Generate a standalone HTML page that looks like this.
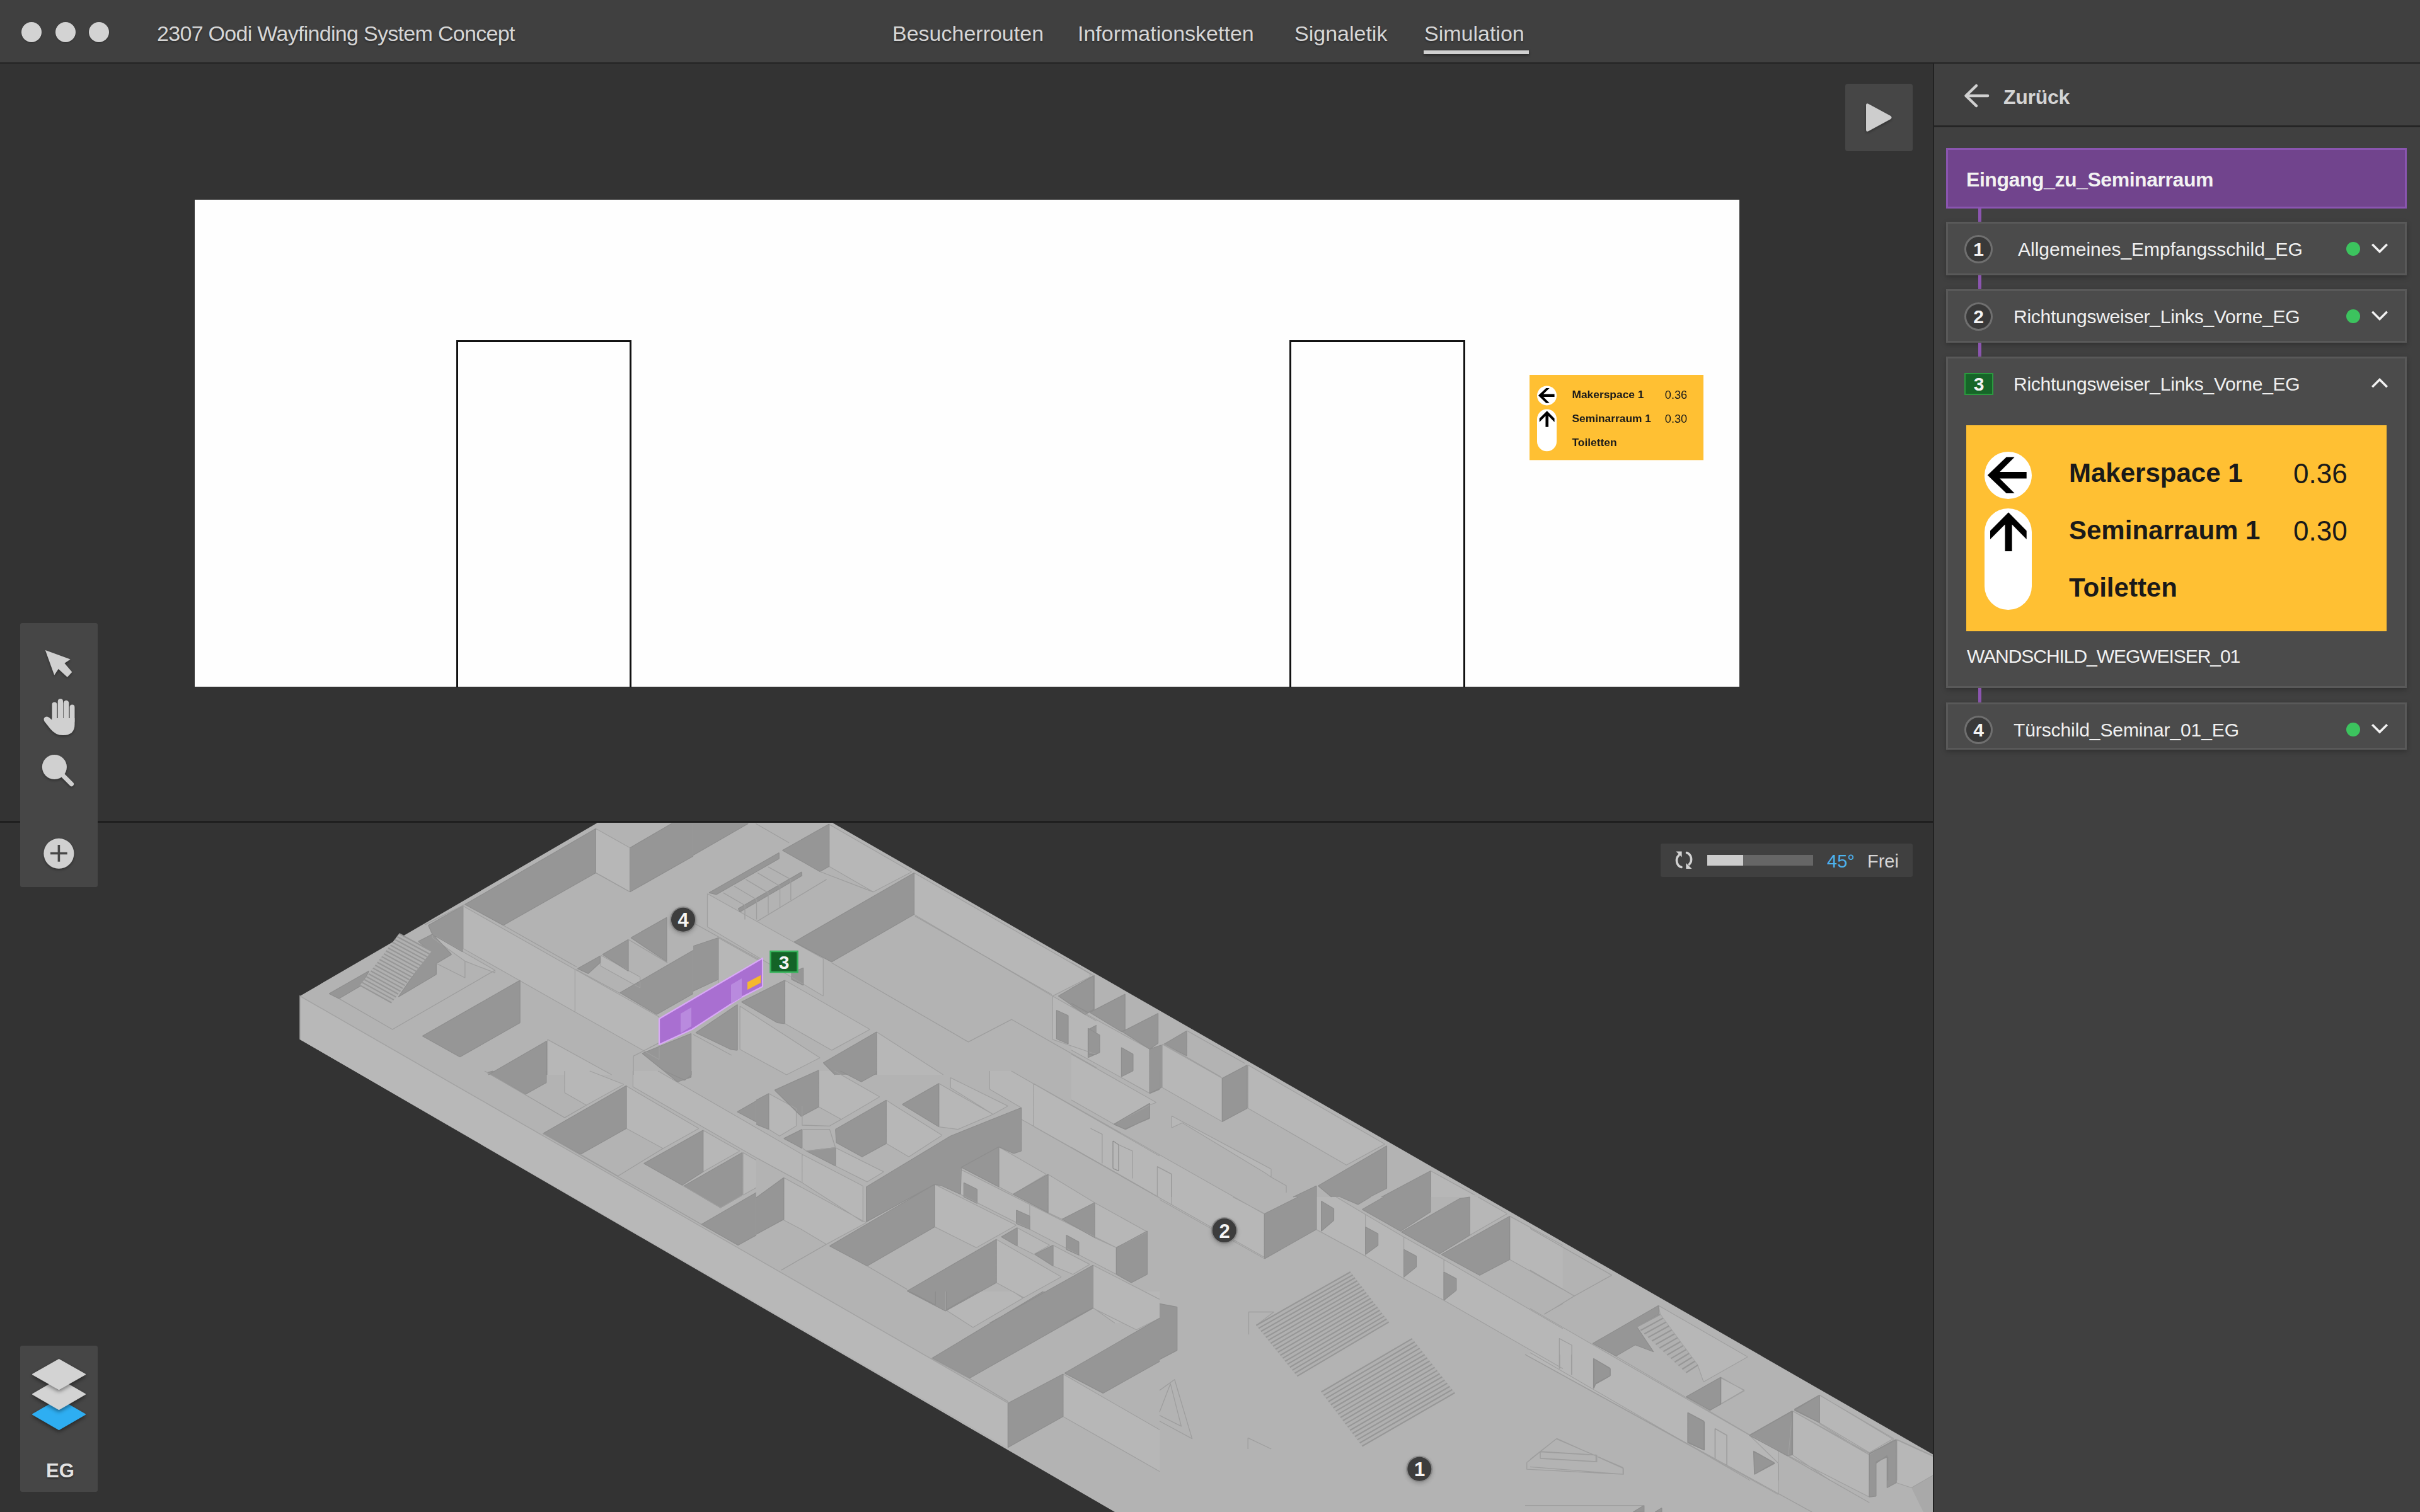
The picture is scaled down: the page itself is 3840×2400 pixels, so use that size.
<!DOCTYPE html>
<html><head><meta charset="utf-8">
<style>
*{margin:0;padding:0;box-sizing:border-box}
html,body{width:3840px;height:2400px;overflow:hidden;background:#333333;font-family:"Liberation Sans",sans-serif}
.abs{position:absolute}
#topbar{position:absolute;left:0;top:0;width:3840px;height:99px;background:#404040;border-bottom:2px solid #232323;height:101px}
.dot{position:absolute;top:35px;width:32px;height:32px;border-radius:50%;background:#d3d3d3;box-shadow:0 1px 2px rgba(0,0,0,.35)}
.t{position:absolute;white-space:nowrap;line-height:1}
#title{left:249px;top:36px;font-size:34px;letter-spacing:-0.7px;color:#d6d6d6;text-shadow:0 2px 3px rgba(0,0,0,.35)}
.nav{top:36px;font-size:34px;color:#d6d6d6;text-shadow:0 2px 3px rgba(0,0,0,.35)}
#uline{left:2259px;top:80px;width:167px;height:6px;background:#d0d0d0;box-shadow:0 2px 4px rgba(0,0,0,.4)}
#panel{position:absolute;left:3067px;top:101px;width:773px;height:2299px;background:#404040;border-left:2px solid #222}
#panelhead{position:absolute;left:3069px;top:101px;width:771px;height:101px;border-bottom:3px solid #252525}
#play{left:2928px;top:133px;width:107px;height:107px;background:#464646;border-radius:4px}
#elev{left:309px;top:317px;width:2451px;height:773px;background:#fefefe}
.door{position:absolute;top:540px;height:551px;border:3px solid #111;border-bottom:none}
.item{position:absolute;left:3088px;width:731px;background:#4b4b4b;border:3px solid #595959;box-shadow:0 3px 8px rgba(0,0,0,.25)}
.conn{position:absolute;left:3139px;width:5px;background:#8c55b0}
.num{position:absolute;left:3117px;width:45px;height:45px;border-radius:50%;background:#393939;border:3px solid #6f6f6f;color:#f2f2f2;font-size:30px;font-weight:bold;text-align:center;line-height:39px}
.itxt{position:absolute;left:3197px;font-size:30px;color:#f0f0f0;line-height:1;white-space:nowrap}
.gdot{position:absolute;left:3723px;width:22px;height:22px;border-radius:50%;background:#3cc35e}
.chev{position:absolute;left:3762px}
#tools{left:32px;top:989px;width:123px;height:419px;background:#464646;border-radius:3px}
#layers{left:32px;top:2136px;width:123px;height:232px;background:#464646;border-radius:3px}
#ctrl{left:2635px;top:1339px;width:400px;height:53px;background:#404040;border-radius:3px}
#divider{left:0;top:1303px;width:3067px;height:3px;background:#1f1f1f}
.sign{position:absolute;width:667px;height:327px;background:#ffc033;transform-origin:0 0}
.sign .circ{position:absolute;left:29px;top:42px;width:75px;height:75px;border-radius:50%;background:#fff}
.sign .pill{position:absolute;left:29px;top:132px;width:75px;height:161px;border-radius:38px;background:#fff}
.sign .st{position:absolute;font-weight:bold;font-size:42px;color:#1a1a1a;line-height:1;white-space:nowrap}
.marker{position:absolute;width:40px;height:40px;border-radius:50%;background:#3a3a3a;border:2px solid #5a5a5a;color:#fff;font-size:26px;font-weight:bold;text-align:center;line-height:36px;box-shadow:0 2px 3px rgba(0,0,0,.5)}
</style></head>
<body>
<div id="topbar"></div>
<div class="dot" style="left:34px"></div>
<div class="dot" style="left:88px"></div>
<div class="dot" style="left:141px"></div>
<div id="title" class="t">2307 Oodi Wayfinding System Concept</div>
<div class="t nav" style="left:1416px">Besucherrouten</div>
<div class="t nav" style="left:1710px">Informationsketten</div>
<div class="t nav" style="left:2054px">Signaletik</div>
<div class="t nav" style="left:2260px">Simulation</div>
<div id="uline" class="abs"></div>

<!-- elevation view -->
<div id="elev" class="abs"></div>
<div class="door" style="left:724px;width:278px"></div>
<div class="door" style="left:2046px;width:279px"></div>
<div class="sign" id="smallsign" style="left:2427px;top:595px;transform:scale(0.4138)">
  <div class="circ"></div><div class="pill"></div><svg style="position:absolute;left:0;top:0" width="667" height="327"><polygon points="33.7,79.3 63.7,50.5 76.7,50.5 53.2,74 95.7,74 95.7,84.6 53.2,84.6 76.7,108.1 63.7,108.1" fill="#000"/><polygon points="67,138.3 95.7,167.6 95.7,181 72.6,157.5 72.6,200 61.5,200 61.5,157.5 38,181 38,167.6" fill="#000"/></svg>
  <div class="st" style="left:163px;top:55px">Makerspace 1</div>
  <div class="st" style="left:163px;top:146px">Seminarraum 1</div>
  <div class="st" style="left:163px;top:237px">Toiletten</div>
  <div class="st" style="left:519px;top:55px;font-weight:normal;font-size:44px">0.36</div>
  <div class="st" style="left:519px;top:146px;font-weight:normal;font-size:44px">0.30</div>
</div>

<div id="play" class="abs"></div>
<div id="divider" class="abs"></div>

<svg class="abs" style="left:0;top:0" width="3067" height="2400" viewBox="0 0 3067 2400">
<defs><filter id="fpblur" x="-50%" y="-50%" width="200%" height="200%"><feGaussianBlur stdDeviation="3"/></filter><clipPath id="fpclip"><rect x="0" y="1306" width="3067" height="1094"/></clipPath></defs>
<g clip-path="url(#fpclip)">
<polygon points="476,1581 948,1306 1321,1306 3068,2309 3068,2400 1769,2400 476,1650" fill="#b3b3b3"/>
<polygon points="476,1581 476,1650 1599.5,2298 1599.5,2227" fill="#b8b8b8"/><path d="M476,1650 L476,1581 L1599.5,2227 L1599.5,2298" fill="none" stroke="#a3a3a3" stroke-width="1.5"/>
<polygon points="735.1,1438.3 912.4,1538.8 912.4,1606.3 735.1,1505.7" fill="#b7b7b7"/>
<polygon points="912.4,1538.8 1046.0,1614.2 1046.0,1681.7 912.4,1606.3" fill="#b7b7b7"/>
<polygon points="945.4,1315.3 999.7,1345.7 999.7,1415.8 945.4,1385.4" fill="#b7b7b7"/>
<polygon points="868.7,1649.9 970.6,1706.0 868.7,1706.0" fill="#b7b7b7"/>
<polygon points="686.2,1482.7 785.4,1540.1 785.4,1544.1 737.8,1525.6 686.2,1488.5" fill="#b7b7b7"/>
<polygon points="953.4,1516.3 1015.6,1550.7 1015.6,1567.9 953.4,1533.5" fill="#b7b7b7"/>
<polygon points="1122.5,1418.4 1306.3,1521.6 1306.3,1581.1 1122.5,1471.3" fill="#b7b7b7"/>
<polygon points="1450.5,1385.4 1729.6,1545.4 1729.6,1550.7 1670.1,1581.1 1450.5,1451.5" fill="#b7b7b7"/>
<polygon points="1245.5,1556.0 1380.4,1634.0 1319.6,1667.1 1245.5,1624.8" fill="#b7b7b7"/>
<polygon points="1174.1,1597.0 1301.1,1679.0 1248.1,1706.0 1174.1,1665.8" fill="#b7b7b7"/>
<polygon points="1139.7,1488.5 1205.8,1525.6 1139.7,1563.9" fill="#b7b7b7"/>
<polygon points="1391.0,1638.0 1496.8,1706.0 1391.0,1706.0" fill="#b7b7b7"/>
<polygon points="1670.1,1581.1 1739.9,1620.8 1739.9,1673.7 1670.1,1649.9" fill="#b7b7b7"/>
<polygon points="1315.6,1308.6 1446.6,1384.0 1385.7,1415.8 1315.6,1375.3" fill="#b7b7b7"/>
<polygon points="1171.4,1442.2 1272.0,1384.0 1272.5,1390.1 1174.1,1447.5" fill="#969696"/>
<polygon points="1700.0,1596.6 1824.3,1665.3 1824.3,1735.4 1700.0,1666.7" fill="#b7b7b7"/>
<polygon points="1844.2,1657.4 1939.4,1711.6 1939.4,1780.4 1844.2,1726.2" fill="#b7b7b7"/>
<polygon points="1980.4,1690.5 2197.4,1816.1 2136.5,1849.2 1980.4,1759.3" fill="#b7b7b7"/>
<polygon points="1700.0,1673.3 1834.9,1750.0 1824.3,1754.0 1767.5,1784.4 1700.0,1746.0" fill="#b7b7b7"/>
<polygon points="2270.1,1858.5 2339.9,1896.8 2339.9,1900.0 2270.1,1900.0" fill="#b7b7b7"/>
<polygon points="896.0,1700.0 935.7,1700.0 989.9,1721.2 930.4,1754.2 896.0,1734.4" fill="#b7b7b7"/>
<polygon points="993.9,1723.8 1108.9,1791.3 1052.1,1823.0 993.9,1791.3" fill="#b7b7b7"/>
<polygon points="1004.4,1700.0 1044.1,1700.0 1199.9,1789.9 1199.9,1837.6 1004.4,1725.1" fill="#b7b7b7"/>
<polygon points="1115.6,1793.9 1173.8,1827.0 1115.6,1860.1" fill="#b7b7b7"/>
<polygon points="1179.0,1829.6 1199.9,1841.5 1199.9,1885.2 1179.0,1897.1" fill="#b7b7b7"/>
<polygon points="1299.2,1700.0 1324.3,1700.0 1395.8,1741.0 1334.9,1776.7 1299.2,1756.9" fill="#b7b7b7"/>
<polygon points="1219.8,1735.7 1263.5,1759.5 1263.5,1787.3 1237.0,1803.2 1219.8,1792.6" fill="#b7b7b7"/>
<polygon points="1406.3,1746.3 1424.9,1758.2 1495.0,1801.9 1442.1,1836.2 1406.3,1815.1" fill="#b7b7b7"/>
<polygon points="1489.7,1719.8 1575.7,1768.8 1520.1,1792.6 1489.7,1788.6" fill="#b7b7b7"/>
<polygon points="1508.2,1710.6 1599.5,1755.6 1575.7,1768.8 1508.2,1726.5" fill="#b7b7b7"/>
<polygon points="1325.7,1821.7 1402.4,1860.1 1375.9,1875.9 1325.7,1850.8" fill="#b7b7b7"/>
<polygon points="1272.8,1832.3 1369.3,1882.5 1369.3,1939.4 1272.8,1877.2" fill="#b7b7b7"/>
<polygon points="1200.0,1789.9 1272.8,1832.3 1272.8,1877.2 1200.0,1837.6" fill="#b7b7b7"/>
<polygon points="1243.7,1869.3 1374.6,1940.7 1311.1,1975.1 1271.4,1951.3 1243.7,1936.8" fill="#b7b7b7"/>
<polygon points="1483.1,1879.9 1612.7,1944.7 1549.2,1980.4 1483.1,1947.4" fill="#b7b7b7"/>
<polygon points="1584.9,1820.4 1660.3,1864.0 1607.4,1895.8 1584.9,1883.9" fill="#b7b7b7"/>
<polygon points="1524.1,1856.1 1633.9,1911.6 1633.9,1951.3 1524.1,1895.8" fill="#b7b7b7"/>
<polygon points="1663.0,1864.0 1737.0,1909.0 1685.4,1935.4 1663.0,1924.9" fill="#b7b7b7"/>
<polygon points="1633.9,1911.6 1771.4,1980.4 1771.4,2022.8 1633.9,1951.3" fill="#b7b7b7"/>
<polygon points="1737.0,1909.0 1820.4,1955.3 1771.4,1980.4 1737.0,1964.6" fill="#b7b7b7"/>
<polygon points="1581.0,1967.2 1684.1,2026.7 1624.6,2059.8 1581.0,2036.0" fill="#b7b7b7"/>
<polygon points="1614.0,1948.7 1665.6,1976.5 1640.5,1991.0 1614.0,1977.8" fill="#b7b7b7"/>
<polygon points="1670.9,1976.5 1729.1,2006.9 1702.6,2022.8 1670.9,2009.5" fill="#b7b7b7"/>
<polygon points="1734.4,2008.2 1839.9,2062.4 1839.9,2100.0 1768.8,2100.0 1734.4,2075.7" fill="#b7b7b7"/>
<polygon points="1570.4,1700.0 1604.8,1700.0 1839.9,1834.9 1839.9,1901.1 1796.6,1875.9 1620.6,1776.7 1620.6,1758.2 1570.4,1729.1" fill="#b7b7b7"/>
<polygon points="1840.0,1900.0 1956.4,1900.0 2006.7,1926.5 2006.7,1997.9 1840.0,1904.0" fill="#b7b7b7"/>
<polygon points="2088.7,1900.0 2120.4,1900.0 2166.7,1927.8 2166.7,1993.9 2088.7,1951.6" fill="#b7b7b7"/>
<polygon points="2166.7,1927.8 2227.6,1963.5 2227.6,2029.6 2166.7,1993.9" fill="#b7b7b7"/>
<polygon points="2227.6,1963.5 2291.1,1999.2 2291.1,2064.0 2227.6,2029.6" fill="#b7b7b7"/>
<polygon points="2291.1,1999.2 2479.9,2109.0 2479.9,2172.5 2291.1,2064.0" fill="#b7b7b7"/>
<polygon points="2332.1,1900.0 2345.3,1900.0 2391.6,1926.5 2332.1,1960.8" fill="#b7b7b7"/>
<polygon points="2395.6,1930.4 2479.9,1976.7 2479.9,2046.8 2395.6,1999.2" fill="#b7b7b7"/>
<polygon points="2428.0,2077.0 2775.9,2278.0 2822.2,2323.0 2822.2,2350.0 2777.2,2350.0 2428.0,2147.1" fill="#b7b7b7"/>
<polygon points="2844.7,2239.7 2966.4,2307.1 2966.4,2350.0 2904.2,2350.0 2844.7,2309.8" fill="#b7b7b7"/>
<polygon points="2631.7,2072.2 2773.2,2153.7 2703.1,2193.4 2693.9,2166.9 2634.3,2086.2" fill="#b7b7b7"/>
<polygon points="2729.6,2186.8 2767.9,2206.6 2729.6,2229.1" fill="#b7b7b7"/>
<polygon points="2887.0,2214.6 3004.7,2283.3 2966.4,2305.8 2887.0,2258.2" fill="#b7b7b7"/>
<polygon points="3010.0,2284.7 3067.9,2311.1 3067.9,2350.0 3010.0,2350.0" fill="#b7b7b7"/>
<polygon points="1686.8,2181.0 1840.2,2269.6 1840.2,2335.7 1686.8,2248.4" fill="#b7b7b7"/>
<polygon points="1500.3,2079.1 1500.3,2050.0 1607.4,2050.0 1623.3,2060.6 1543.9,2106.9" fill="#b7b7b7"/>
<polygon points="1734.4,2050.0 1840.2,2050.0 1840.2,2092.3 1803.2,2110.8 1734.4,2076.5" fill="#b7b7b7"/>
<polygon points="2559.2,2150.0 2776.1,2277.2 2821.6,2302.6 2821.6,2372.2 2420.0,2150.0" fill="#b7b7b7"/>
<polygon points="2844.4,2239.7 2966.2,2309.3 2966.2,2376.2 2837.7,2310.6" fill="#b7b7b7"/>
<polygon points="2887.2,2214.3 3005.0,2285.2 2966.2,2309.3 2887.2,2259.8" fill="#b7b7b7"/>
<polygon points="3009.0,2285.2 3067.9,2312.0 3067.9,2341.4 3033.1,2361.5 3009.0,2353.5" fill="#b7b7b7"/>
<polygon points="2730.6,2186.1 2768.1,2207.6 2730.6,2229.0" fill="#b7b7b7"/>
<polygon points="1859.2,1771.3 2017.0,1855.6 2017.0,1868.5 2007.0,1861.5 1876.0,1782.2 1859.2,1790.1" fill="#b7b7b7"/>
<polygon points="1766.0,1811.0 1775.0,1817.0 1775.0,1858.6 1766.0,1854.6" fill="#969696"/>
<polygon points="1640.0,1719.7 2006.0,1927.0 2006.0,1995.5 1640.0,1788.1" fill="#b7b7b7"/>
<polygon points="737.8,1435.6 945.4,1315.3 945.4,1385.4 798.6,1468.7" fill="#969696"/>
<polygon points="999.7,1345.7 1065.8,1307.3 1099.9,1307.3 1099.9,1358.9 999.7,1415.8" fill="#969696"/>
<polygon points="679.6,1468.7 733.8,1438.3 733.8,1510.8 686.2,1483.2" fill="#969696"/>
<polygon points="522.2,1577.2 585.7,1540.9 573.8,1563.9 538.0,1585.1" fill="#969696"/>
<polygon points="663.7,1494.4 686.2,1482.7 716.6,1515.0 692.3,1529.5 692.3,1546.7 632.0,1582.5 682.2,1509.7" fill="#969696"/>
<polygon points="670.3,1644.6 825.1,1556.0 825.1,1623.5 729.8,1677.7" fill="#969696"/>
<polygon points="916.3,1537.5 952.1,1517.6 952.1,1528.2 933.5,1545.4" fill="#969696"/>
<polygon points="956.0,1515.0 997.0,1491.2 997.0,1541.4" fill="#969696"/>
<polygon points="1001.0,1488.5 1057.9,1456.3 1057.9,1526.4" fill="#969696"/>
<polygon points="983.8,1575.8 1099.9,1508.4 1099.9,1577.2 1042.0,1610.2" fill="#969696"/>
<polygon points="774.8,1706.0 867.4,1652.6 867.4,1706.0" fill="#969696"/>
<polygon points="1100.0,1357.6 1187.3,1307.3 1100.0,1307.3" fill="#969696"/>
<polygon points="1125.1,1417.1 1236.2,1353.6 1236.2,1362.9 1137.0,1419.8" fill="#969696"/>
<polygon points="1241.5,1349.7 1315.6,1308.1 1315.6,1375.3 1301.1,1383.5" fill="#969696"/>
<polygon points="1260.1,1495.2 1450.5,1385.4 1450.5,1451.5 1319.6,1526.9" fill="#969696"/>
<polygon points="1100.0,1501.8 1139.7,1488.5 1139.7,1554.7 1100.0,1573.2" fill="#969696"/>
<polygon points="1176.7,1590.4 1245.0,1556.0 1245.0,1624.8 1233.6,1623.5" fill="#969696"/>
<polygon points="1104.0,1639.3 1170.1,1594.4 1170.1,1667.1 1159.5,1665.8" fill="#969696"/>
<polygon points="1256.1,1544.1 1274.6,1536.2 1274.6,1563.9 1256.1,1554.7" fill="#969696"/>
<polygon points="1306.3,1687.0 1391.0,1638.0 1391.0,1706.0 1324.9,1706.0" fill="#969696"/>
<polygon points="1679.4,1581.1 1736.2,1548.1 1736.2,1602.3 1721.7,1610.2" fill="#969696"/>
<polygon points="1727.0,1634.0 1739.9,1627.4 1739.9,1673.7 1727.0,1673.7" fill="#969696"/>
<polygon points="1700.0,1568.8 1735.7,1548.9 1735.7,1601.9 1726.5,1607.1 1700.0,1592.6" fill="#969696"/>
<polygon points="1729.1,1607.1 1785.2,1578.0 1785.2,1634.9 1779.4,1637.6" fill="#969696"/>
<polygon points="1780.7,1637.6 1837.6,1608.5 1837.6,1656.1 1824.3,1665.3" fill="#969696"/>
<polygon points="1846.8,1657.4 1883.1,1636.2 1883.1,1675.9" fill="#969696"/>
<polygon points="1939.4,1711.6 1979.1,1690.5 1979.1,1759.3 1939.4,1780.4" fill="#969696"/>
<polygon points="1824.3,1665.3 1842.9,1658.7 1842.9,1726.2 1824.3,1735.4" fill="#969696"/>
<polygon points="1726.5,1632.3 1745.0,1642.9 1745.0,1670.6 1726.5,1678.6" fill="#969696"/>
<polygon points="1779.4,1662.7 1797.9,1673.3 1797.9,1699.7 1779.4,1709.0" fill="#969696"/>
<polygon points="1767.5,1784.4 1824.3,1751.3 1824.3,1775.1 1784.7,1792.3" fill="#969696"/>
<polygon points="2091.5,1882.3 2200.5,1818.8 2200.5,1886.2 2173.5,1900.0 2112.7,1900.0" fill="#969696"/>
<polygon points="2192.1,1900.0 2270.1,1858.5 2270.1,1900.0" fill="#969696"/>
<polygon points="2051.9,1900.0 2088.9,1882.3 2088.9,1900.0" fill="#969696"/>
<polygon points="773.0,1702.6 782.2,1700.0 866.9,1700.0 866.9,1718.5 833.8,1737.0" fill="#969696"/>
<polygon points="861.6,1799.2 993.9,1723.3 993.9,1791.3 921.1,1832.3" fill="#969696"/>
<polygon points="1021.6,1846.8 1115.6,1793.9 1115.6,1860.1 1082.5,1881.2" fill="#969696"/>
<polygon points="1085.1,1882.5 1177.7,1829.6 1177.7,1897.1 1143.3,1916.9" fill="#969696"/>
<polygon points="1112.9,1943.4 1199.9,1893.1 1199.9,1960.6 1171.1,1976.5" fill="#969696"/>
<polygon points="1054.7,1700.0 1097.0,1700.0 1097.0,1706.6 1086.5,1714.6" fill="#969696"/>
<polygon points="1169.8,1764.8 1199.9,1747.6 1199.9,1780.7" fill="#969696"/>
<polygon points="1229.1,1730.4 1299.2,1698.7 1299.2,1756.9 1271.4,1772.0" fill="#969696"/>
<polygon points="1200.0,1746.3 1219.8,1735.7 1219.8,1792.6 1200.0,1784.7" fill="#969696"/>
<polygon points="1333.6,1700.0 1390.5,1700.0 1390.5,1704.0 1366.7,1717.2" fill="#969696"/>
<polygon points="1431.5,1752.9 1489.7,1719.8 1489.7,1788.6" fill="#969696"/>
<polygon points="1325.7,1792.6 1406.3,1746.3 1406.3,1815.1 1368.0,1836.2 1327.0,1813.8" fill="#969696"/>
<polygon points="1243.7,1807.1 1272.8,1792.6 1272.8,1823.0 1263.5,1817.7" fill="#969696"/>
<polygon points="1279.4,1827.0 1325.7,1821.7 1325.7,1850.8" fill="#969696"/>
<polygon points="1374.6,1883.9 1508.2,1803.2 1620.6,1758.2 1620.6,1827.0 1608.7,1831.0 1584.9,1820.4 1525.4,1852.9 1524.1,1895.8 1495.0,1882.5 1483.1,1879.9 1374.6,1939.4" fill="#969696"/>
<polygon points="1316.4,1977.8 1483.1,1879.9 1483.1,1947.4 1375.9,2009.5" fill="#969696"/>
<polygon points="1200.0,1901.1 1243.7,1869.3 1243.7,1935.4 1200.0,1959.3" fill="#969696"/>
<polygon points="1525.4,1852.9 1584.9,1820.4 1584.9,1883.9" fill="#969696"/>
<polygon points="1607.4,1895.8 1663.0,1864.0 1663.0,1924.9" fill="#969696"/>
<polygon points="1685.4,1935.4 1737.0,1909.0 1737.0,1964.6" fill="#969696"/>
<polygon points="1771.4,1980.4 1820.4,1954.0 1820.4,2022.8 1795.2,2036.0 1771.4,2022.8" fill="#969696"/>
<polygon points="1529.4,1877.2 1550.5,1887.8 1550.5,1910.3 1529.4,1899.7" fill="#969696"/>
<polygon points="1612.7,1920.9 1633.9,1930.2 1633.9,1951.3 1612.7,1942.1" fill="#969696"/>
<polygon points="1692.1,1960.6 1711.9,1971.2 1711.9,1992.3 1692.1,1983.1" fill="#969696"/>
<polygon points="1439.4,2049.2 1581.0,1967.2 1581.0,2036.0 1500.3,2081.0" fill="#969696"/>
<polygon points="1588.9,1963.2 1614.0,1948.7 1614.0,1977.8" fill="#969696"/>
<polygon points="1641.8,1991.0 1670.9,1976.5 1670.9,2009.5" fill="#969696"/>
<polygon points="1570.4,2100.0 1734.4,2008.2 1734.4,2075.7 1689.4,2100.0" fill="#969696"/>
<polygon points="1767.5,1784.7 1824.3,1751.6 1824.3,1774.1 1786.0,1792.6" fill="#969696"/>
<polygon points="1824.3,1700.0 1839.9,1700.0 1839.9,1729.1 1824.3,1735.7" fill="#969696"/>
<polygon points="2006.7,1926.5 2059.6,1900.0 2088.7,1900.0 2088.7,1951.6 2006.7,1997.9" fill="#969696"/>
<polygon points="2096.6,1906.6 2116.5,1918.5 2116.5,1937.0 2096.6,1954.2" fill="#969696"/>
<polygon points="2127.0,1900.0 2174.7,1900.0 2154.8,1911.9" fill="#969696"/>
<polygon points="2161.4,1919.8 2195.8,1900.0 2269.9,1900.0 2269.9,1923.8 2222.3,1954.2" fill="#969696"/>
<polygon points="2223.6,1955.6 2316.2,1902.6 2332.1,1900.0 2332.1,1960.8 2284.4,1989.9" fill="#969696"/>
<polygon points="2287.1,1991.3 2395.6,1930.4 2395.6,1999.2 2347.9,2024.3" fill="#969696"/>
<polygon points="2166.7,1947.6 2186.6,1958.2 2186.6,1976.7 2166.7,1991.3" fill="#969696"/>
<polygon points="2227.6,1983.3 2247.4,1993.9 2247.4,2011.1 2227.6,2027.0" fill="#969696"/>
<polygon points="2291.1,2019.0 2310.9,2029.6 2310.9,2048.1 2291.1,2064.0" fill="#969696"/>
<polygon points="1840.0,2069.3 1867.8,2074.6 1867.8,2143.4 1840.0,2157.9" fill="#969696"/>
<polygon points="1993.4,2103.7 2142.9,2019.0 2203.8,2098.4 2058.3,2184.4" fill="#a9a9a9"/>
<polygon points="2096.6,2209.5 2240.8,2124.9 2308.3,2210.8 2161.4,2295.5" fill="#a9a9a9"/>
<polygon points="2527.2,2132.5 2631.7,2072.2 2631.7,2086.2 2597.3,2106.1 2623.8,2145.8 2594.7,2134.7 2564.2,2152.4" fill="#969696"/>
<polygon points="2675.4,2217.2 2729.6,2186.8 2729.6,2229.1 2713.7,2238.4" fill="#969696"/>
<polygon points="2775.9,2278.0 2843.3,2239.7 2843.3,2308.5 2836.7,2311.1" fill="#969696"/>
<polygon points="2847.3,2238.4 2887.0,2214.6 2887.0,2258.2" fill="#969696"/>
<polygon points="2528.5,2156.3 2555.0,2171.7 2555.0,2184.1 2531.2,2197.4 2528.5,2204.0" fill="#969696"/>
<polygon points="2678.0,2242.3 2704.5,2256.9 2704.5,2301.9 2678.0,2289.9" fill="#969696"/>
<polygon points="2782.5,2303.2 2815.6,2321.7 2783.8,2340.2" fill="#969696"/>
<polygon points="2966.4,2307.1 3008.7,2284.7 3008.7,2350.0 2995.5,2350.0 2995.5,2312.4 2976.9,2320.4 2976.9,2350.0 2966.4,2350.0" fill="#969696"/>
<polygon points="2597.3,2106.1 2634.3,2086.2 2693.9,2166.9 2675.4,2178.8" fill="#a9a9a9"/>
<polygon points="1443.4,2050.0 1484.4,2050.0 1484.4,2071.2" fill="#969696"/>
<polygon points="1501.6,2050.0 1551.9,2050.0 1501.6,2079.1" fill="#969696"/>
<polygon points="1479.1,2155.8 1655.0,2050.0 1734.4,2050.0 1734.4,2076.5 1538.6,2187.6" fill="#969696"/>
<polygon points="1599.5,2227.2 1686.8,2181.0 1686.8,2248.4 1599.5,2297.4" fill="#969696"/>
<polygon points="1689.4,2179.6 1840.2,2092.3 1840.2,2161.1 1750.3,2211.4" fill="#969696"/>
<polygon points="2675.7,2216.9 2730.6,2186.1 2730.6,2229.0 2713.2,2238.4" fill="#969696"/>
<polygon points="2776.1,2278.5 2844.4,2239.7 2844.4,2309.3 2836.3,2310.6" fill="#969696"/>
<polygon points="2847.0,2237.0 2887.2,2214.3 2887.2,2258.4" fill="#969696"/>
<polygon points="2678.4,2242.4 2703.8,2255.8 2703.8,2301.3 2678.4,2289.2" fill="#969696"/>
<polygon points="2782.8,2303.9 2816.3,2322.7 2784.1,2340.1" fill="#969696"/>
<polygon points="2966.2,2308.0 3009.0,2285.2 3009.0,2353.5 2994.3,2361.5 2994.3,2310.6 2976.9,2322.7 2976.9,2374.9 2966.2,2376.2" fill="#969696"/>
<polygon points="2529.2,2156.7 2555.2,2172.8 2555.2,2183.5 2532.4,2195.5 2529.2,2203.5" fill="#969696"/>
<polygon points="3033.1,2361.5 3067.9,2341.4 3067.9,2400.1 3051.9,2400.1" fill="#a9a9a9"/>
<polygon points="2591.4,2400.1 2608.8,2389.6 2608.8,2400.1" fill="#969696"/>
<polygon points="2626.2,2400.1 2636.9,2393.6 2636.9,2400.1" fill="#969696"/>
<polygon points="1676.4,1603.5 1695.0,1612.0 1695.0,1657.0 1676.4,1649.0" fill="#969696"/>
<polygon points="1018.9,1672.0 1096.6,1640.6 1096.6,1710.0 1075.0,1717.3" fill="#969696"/>
<path d="M735.1,1438.3 L912.4,1538.8 M912.4,1538.8 L912.4,1606.3 M912.4,1606.3 L735.1,1505.7 M735.1,1505.7 L735.1,1438.3 M912.4,1538.8 L1046.0,1614.2 M1046.0,1614.2 L1046.0,1681.7 M1046.0,1681.7 L912.4,1606.3 M912.4,1606.3 L912.4,1538.8 M945.4,1315.3 L999.7,1345.7 M999.7,1345.7 L999.7,1415.8 M999.7,1415.8 L945.4,1385.4 M945.4,1385.4 L945.4,1315.3 M868.7,1649.9 L970.6,1706.0 M868.7,1706.0 L868.7,1649.9 M686.2,1482.7 L785.4,1540.1 M785.4,1540.1 L785.4,1544.1 M785.4,1544.1 L737.8,1525.6 M737.8,1525.6 L686.2,1488.5 M686.2,1488.5 L686.2,1482.7 M953.4,1516.3 L1015.6,1550.7 M1015.6,1550.7 L1015.6,1567.9 M1015.6,1567.9 L953.4,1533.5 M953.4,1533.5 L953.4,1516.3 M1122.5,1418.4 L1306.3,1521.6 M1306.3,1521.6 L1306.3,1581.1 M1306.3,1581.1 L1122.5,1471.3 M1122.5,1471.3 L1122.5,1418.4 M1450.5,1385.4 L1729.6,1545.4 M1729.6,1545.4 L1729.6,1550.7 M1729.6,1550.7 L1670.1,1581.1 M1670.1,1581.1 L1450.5,1451.5 M1450.5,1451.5 L1450.5,1385.4 M1245.5,1556.0 L1380.4,1634.0 M1380.4,1634.0 L1319.6,1667.1 M1319.6,1667.1 L1245.5,1624.8 M1245.5,1624.8 L1245.5,1556.0 M1174.1,1597.0 L1301.1,1679.0 M1301.1,1679.0 L1248.1,1706.0 M1248.1,1706.0 L1174.1,1665.8 M1174.1,1665.8 L1174.1,1597.0 M1139.7,1488.5 L1205.8,1525.6 M1205.8,1525.6 L1139.7,1563.9 M1139.7,1563.9 L1139.7,1488.5 M1391.0,1638.0 L1496.8,1706.0 M1391.0,1706.0 L1391.0,1638.0 M1670.1,1581.1 L1739.9,1620.8 M1739.9,1673.7 L1670.1,1649.9 M1670.1,1649.9 L1670.1,1581.1 M1315.6,1308.6 L1446.6,1384.0 M1446.6,1384.0 L1385.7,1415.8 M1385.7,1415.8 L1315.6,1375.3 M1315.6,1375.3 L1315.6,1308.6 M1700.0,1596.6 L1824.3,1665.3 M1824.3,1665.3 L1824.3,1735.4 M1824.3,1735.4 L1700.0,1666.7 M1844.2,1657.4 L1939.4,1711.6 M1939.4,1711.6 L1939.4,1780.4 M1939.4,1780.4 L1844.2,1726.2 M1844.2,1726.2 L1844.2,1657.4 M1980.4,1690.5 L2197.4,1816.1 M2197.4,1816.1 L2136.5,1849.2 M2136.5,1849.2 L1980.4,1759.3 M1980.4,1759.3 L1980.4,1690.5 M1700.0,1673.3 L1834.9,1750.0 M1834.9,1750.0 L1824.3,1754.0 M1824.3,1754.0 L1767.5,1784.4 M1767.5,1784.4 L1700.0,1746.0 M2270.1,1858.5 L2339.9,1896.8 M2270.1,1900.0 L2270.1,1858.5 M935.7,1700.0 L989.9,1721.2 M989.9,1721.2 L930.4,1754.2 M930.4,1754.2 L896.0,1734.4 M896.0,1734.4 L896.0,1700.0 M993.9,1723.8 L1108.9,1791.3 M1108.9,1791.3 L1052.1,1823.0 M1052.1,1823.0 L993.9,1791.3 M993.9,1791.3 L993.9,1723.8 M1044.1,1700.0 L1199.9,1789.9 M1199.9,1837.6 L1004.4,1725.1 M1004.4,1725.1 L1004.4,1700.0 M1115.6,1793.9 L1173.8,1827.0 M1173.8,1827.0 L1115.6,1860.1 M1115.6,1860.1 L1115.6,1793.9 M1179.0,1829.6 L1199.9,1841.5 M1199.9,1885.2 L1179.0,1897.1 M1179.0,1897.1 L1179.0,1829.6 M1324.3,1700.0 L1395.8,1741.0 M1395.8,1741.0 L1334.9,1776.7 M1334.9,1776.7 L1299.2,1756.9 M1299.2,1756.9 L1299.2,1700.0 M1219.8,1735.7 L1263.5,1759.5 M1263.5,1759.5 L1263.5,1787.3 M1263.5,1787.3 L1237.0,1803.2 M1237.0,1803.2 L1219.8,1792.6 M1219.8,1792.6 L1219.8,1735.7 M1406.3,1746.3 L1424.9,1758.2 M1424.9,1758.2 L1495.0,1801.9 M1495.0,1801.9 L1442.1,1836.2 M1442.1,1836.2 L1406.3,1815.1 M1406.3,1815.1 L1406.3,1746.3 M1489.7,1719.8 L1575.7,1768.8 M1575.7,1768.8 L1520.1,1792.6 M1520.1,1792.6 L1489.7,1788.6 M1489.7,1788.6 L1489.7,1719.8 M1508.2,1710.6 L1599.5,1755.6 M1599.5,1755.6 L1575.7,1768.8 M1575.7,1768.8 L1508.2,1726.5 M1508.2,1726.5 L1508.2,1710.6 M1325.7,1821.7 L1402.4,1860.1 M1402.4,1860.1 L1375.9,1875.9 M1375.9,1875.9 L1325.7,1850.8 M1325.7,1850.8 L1325.7,1821.7 M1272.8,1832.3 L1369.3,1882.5 M1369.3,1882.5 L1369.3,1939.4 M1369.3,1939.4 L1272.8,1877.2 M1272.8,1877.2 L1272.8,1832.3 M1200.0,1789.9 L1272.8,1832.3 M1272.8,1832.3 L1272.8,1877.2 M1272.8,1877.2 L1200.0,1837.6 M1243.7,1869.3 L1374.6,1940.7 M1374.6,1940.7 L1311.1,1975.1 M1311.1,1975.1 L1271.4,1951.3 M1271.4,1951.3 L1243.7,1936.8 M1243.7,1936.8 L1243.7,1869.3 M1483.1,1879.9 L1612.7,1944.7 M1612.7,1944.7 L1549.2,1980.4 M1549.2,1980.4 L1483.1,1947.4 M1483.1,1947.4 L1483.1,1879.9 M1584.9,1820.4 L1660.3,1864.0 M1660.3,1864.0 L1607.4,1895.8 M1607.4,1895.8 L1584.9,1883.9 M1584.9,1883.9 L1584.9,1820.4 M1524.1,1856.1 L1633.9,1911.6 M1633.9,1911.6 L1633.9,1951.3 M1633.9,1951.3 L1524.1,1895.8 M1524.1,1895.8 L1524.1,1856.1 M1663.0,1864.0 L1737.0,1909.0 M1737.0,1909.0 L1685.4,1935.4 M1685.4,1935.4 L1663.0,1924.9 M1663.0,1924.9 L1663.0,1864.0 M1633.9,1911.6 L1771.4,1980.4 M1771.4,1980.4 L1771.4,2022.8 M1771.4,2022.8 L1633.9,1951.3 M1633.9,1951.3 L1633.9,1911.6 M1737.0,1909.0 L1820.4,1955.3 M1820.4,1955.3 L1771.4,1980.4 M1771.4,1980.4 L1737.0,1964.6 M1737.0,1964.6 L1737.0,1909.0 M1581.0,1967.2 L1684.1,2026.7 M1684.1,2026.7 L1624.6,2059.8 M1624.6,2059.8 L1581.0,2036.0 M1581.0,2036.0 L1581.0,1967.2 M1614.0,1948.7 L1665.6,1976.5 M1665.6,1976.5 L1640.5,1991.0 M1640.5,1991.0 L1614.0,1977.8 M1614.0,1977.8 L1614.0,1948.7 M1670.9,1976.5 L1729.1,2006.9 M1729.1,2006.9 L1702.6,2022.8 M1702.6,2022.8 L1670.9,2009.5 M1670.9,2009.5 L1670.9,1976.5 M1734.4,2008.2 L1839.9,2062.4 M1768.8,2100.0 L1734.4,2075.7 M1734.4,2075.7 L1734.4,2008.2 M1604.8,1700.0 L1839.9,1834.9 M1839.9,1901.1 L1796.6,1875.9 M1796.6,1875.9 L1620.6,1776.7 M1620.6,1776.7 L1620.6,1758.2 M1620.6,1758.2 L1570.4,1729.1 M1570.4,1729.1 L1570.4,1700.0 M1956.4,1900.0 L2006.7,1926.5 M2006.7,1926.5 L2006.7,1997.9 M2006.7,1997.9 L1840.0,1904.0 M2120.4,1900.0 L2166.7,1927.8 M2166.7,1927.8 L2166.7,1993.9 M2166.7,1993.9 L2088.7,1951.6 M2088.7,1951.6 L2088.7,1900.0 M2166.7,1927.8 L2227.6,1963.5 M2227.6,1963.5 L2227.6,2029.6 M2227.6,2029.6 L2166.7,1993.9 M2166.7,1993.9 L2166.7,1927.8 M2227.6,1963.5 L2291.1,1999.2 M2291.1,1999.2 L2291.1,2064.0 M2291.1,2064.0 L2227.6,2029.6 M2227.6,2029.6 L2227.6,1963.5 M2291.1,1999.2 L2479.9,2109.0 M2479.9,2172.5 L2291.1,2064.0 M2291.1,2064.0 L2291.1,1999.2 M2345.3,1900.0 L2391.6,1926.5 M2391.6,1926.5 L2332.1,1960.8 M2332.1,1960.8 L2332.1,1900.0 M2395.6,1930.4 L2479.9,1976.7 M2479.9,2046.8 L2395.6,1999.2 M2395.6,1999.2 L2395.6,1930.4 M2428.0,2077.0 L2775.9,2278.0 M2775.9,2278.0 L2822.2,2323.0 M2822.2,2323.0 L2822.2,2350.0 M2777.2,2350.0 L2428.0,2147.1 M2844.7,2239.7 L2966.4,2307.1 M2966.4,2307.1 L2966.4,2350.0 M2904.2,2350.0 L2844.7,2309.8 M2844.7,2309.8 L2844.7,2239.7 M2631.7,2072.2 L2773.2,2153.7 M2773.2,2153.7 L2703.1,2193.4 M2703.1,2193.4 L2693.9,2166.9 M2693.9,2166.9 L2634.3,2086.2 M2634.3,2086.2 L2631.7,2072.2 M2729.6,2186.8 L2767.9,2206.6 M2767.9,2206.6 L2729.6,2229.1 M2729.6,2229.1 L2729.6,2186.8 M2887.0,2214.6 L3004.7,2283.3 M3004.7,2283.3 L2966.4,2305.8 M2966.4,2305.8 L2887.0,2258.2 M2887.0,2258.2 L2887.0,2214.6 M3010.0,2284.7 L3067.9,2311.1 M3010.0,2350.0 L3010.0,2284.7 M1686.8,2181.0 L1840.2,2269.6 M1840.2,2335.7 L1686.8,2248.4 M1686.8,2248.4 L1686.8,2181.0 M1500.3,2079.1 L1500.3,2050.0 M1607.4,2050.0 L1623.3,2060.6 M1623.3,2060.6 L1543.9,2106.9 M1543.9,2106.9 L1500.3,2079.1 M1840.2,2092.3 L1803.2,2110.8 M1803.2,2110.8 L1734.4,2076.5 M1734.4,2076.5 L1734.4,2050.0 M2559.2,2150.0 L2776.1,2277.2 M2776.1,2277.2 L2821.6,2302.6 M2821.6,2302.6 L2821.6,2372.2 M2821.6,2372.2 L2420.0,2150.0 M2844.4,2239.7 L2966.2,2309.3 M2966.2,2309.3 L2966.2,2376.2 M2966.2,2376.2 L2837.7,2310.6 M2837.7,2310.6 L2844.4,2239.7 M2887.2,2214.3 L3005.0,2285.2 M3005.0,2285.2 L2966.2,2309.3 M2966.2,2309.3 L2887.2,2259.8 M2887.2,2259.8 L2887.2,2214.3 M3009.0,2285.2 L3067.9,2312.0 M3067.9,2341.4 L3033.1,2361.5 M3033.1,2361.5 L3009.0,2353.5 M3009.0,2353.5 L3009.0,2285.2 M2730.6,2186.1 L2768.1,2207.6 M2768.1,2207.6 L2730.6,2229.0 M2730.6,2229.0 L2730.6,2186.1 M1859.2,1771.3 L2017.0,1855.6 M2017.0,1855.6 L2017.0,1868.5 M2017.0,1868.5 L2007.0,1861.5 M2007.0,1861.5 L1876.0,1782.2 M1876.0,1782.2 L1859.2,1790.1 M1859.2,1790.1 L1859.2,1771.3 M1640.0,1719.7 L2006.0,1927.0 M2006.0,1927.0 L2006.0,1995.5 M2006.0,1995.5 L1640.0,1788.1 M1640.0,1788.1 L1640.0,1719.7" fill="none" stroke="#a0a0a0" stroke-width="1.2"/>
<path d="M1171.4,1442.2 L1272.0,1384.0 M1272.0,1384.0 L1272.5,1390.1 M1272.5,1390.1 L1174.1,1447.5 M1174.1,1447.5 L1171.4,1442.2 M1766.0,1811.0 L1775.0,1817.0 M1775.0,1817.0 L1775.0,1858.6 M1775.0,1858.6 L1766.0,1854.6 M1766.0,1854.6 L1766.0,1811.0 M737.8,1435.6 L945.4,1315.3 M945.4,1315.3 L945.4,1385.4 M945.4,1385.4 L798.6,1468.7 M798.6,1468.7 L737.8,1435.6 M999.7,1345.7 L1065.8,1307.3 M1065.8,1307.3 L1099.9,1307.3 M1099.9,1358.9 L999.7,1415.8 M999.7,1415.8 L999.7,1345.7 M679.6,1468.7 L733.8,1438.3 M733.8,1438.3 L733.8,1510.8 M733.8,1510.8 L686.2,1483.2 M686.2,1483.2 L679.6,1468.7 M522.2,1577.2 L585.7,1540.9 M585.7,1540.9 L573.8,1563.9 M573.8,1563.9 L538.0,1585.1 M538.0,1585.1 L522.2,1577.2 M663.7,1494.4 L686.2,1482.7 M686.2,1482.7 L716.6,1515.0 M716.6,1515.0 L692.3,1529.5 M692.3,1529.5 L692.3,1546.7 M692.3,1546.7 L632.0,1582.5 M632.0,1582.5 L682.2,1509.7 M682.2,1509.7 L663.7,1494.4 M670.3,1644.6 L825.1,1556.0 M825.1,1556.0 L825.1,1623.5 M825.1,1623.5 L729.8,1677.7 M729.8,1677.7 L670.3,1644.6 M916.3,1537.5 L952.1,1517.6 M952.1,1517.6 L952.1,1528.2 M952.1,1528.2 L933.5,1545.4 M933.5,1545.4 L916.3,1537.5 M956.0,1515.0 L997.0,1491.2 M997.0,1491.2 L997.0,1541.4 M997.0,1541.4 L956.0,1515.0 M1001.0,1488.5 L1057.9,1456.3 M1057.9,1456.3 L1057.9,1526.4 M1057.9,1526.4 L1001.0,1488.5 M983.8,1575.8 L1099.9,1508.4 M1099.9,1577.2 L1042.0,1610.2 M1042.0,1610.2 L983.8,1575.8 M774.8,1706.0 L867.4,1652.6 M867.4,1652.6 L867.4,1706.0 M1100.0,1357.6 L1187.3,1307.3 M1187.3,1307.3 L1100.0,1307.3 M1125.1,1417.1 L1236.2,1353.6 M1236.2,1353.6 L1236.2,1362.9 M1236.2,1362.9 L1137.0,1419.8 M1137.0,1419.8 L1125.1,1417.1 M1241.5,1349.7 L1315.6,1308.1 M1315.6,1308.1 L1315.6,1375.3 M1315.6,1375.3 L1301.1,1383.5 M1301.1,1383.5 L1241.5,1349.7 M1260.1,1495.2 L1450.5,1385.4 M1450.5,1385.4 L1450.5,1451.5 M1450.5,1451.5 L1319.6,1526.9 M1319.6,1526.9 L1260.1,1495.2 M1100.0,1501.8 L1139.7,1488.5 M1139.7,1488.5 L1139.7,1554.7 M1139.7,1554.7 L1100.0,1573.2 M1176.7,1590.4 L1245.0,1556.0 M1245.0,1556.0 L1245.0,1624.8 M1245.0,1624.8 L1233.6,1623.5 M1233.6,1623.5 L1176.7,1590.4 M1104.0,1639.3 L1170.1,1594.4 M1170.1,1594.4 L1170.1,1667.1 M1170.1,1667.1 L1159.5,1665.8 M1159.5,1665.8 L1104.0,1639.3 M1256.1,1544.1 L1274.6,1536.2 M1274.6,1536.2 L1274.6,1563.9 M1274.6,1563.9 L1256.1,1554.7 M1256.1,1554.7 L1256.1,1544.1 M1306.3,1687.0 L1391.0,1638.0 M1391.0,1638.0 L1391.0,1706.0 M1324.9,1706.0 L1306.3,1687.0 M1679.4,1581.1 L1736.2,1548.1 M1736.2,1548.1 L1736.2,1602.3 M1736.2,1602.3 L1721.7,1610.2 M1721.7,1610.2 L1679.4,1581.1 M1727.0,1634.0 L1739.9,1627.4 M1739.9,1673.7 L1727.0,1673.7 M1727.0,1673.7 L1727.0,1634.0 M1700.0,1568.8 L1735.7,1548.9 M1735.7,1548.9 L1735.7,1601.9 M1735.7,1601.9 L1726.5,1607.1 M1726.5,1607.1 L1700.0,1592.6 M1729.1,1607.1 L1785.2,1578.0 M1785.2,1578.0 L1785.2,1634.9 M1785.2,1634.9 L1779.4,1637.6 M1779.4,1637.6 L1729.1,1607.1 M1780.7,1637.6 L1837.6,1608.5 M1837.6,1608.5 L1837.6,1656.1 M1837.6,1656.1 L1824.3,1665.3 M1824.3,1665.3 L1780.7,1637.6 M1846.8,1657.4 L1883.1,1636.2 M1883.1,1636.2 L1883.1,1675.9 M1883.1,1675.9 L1846.8,1657.4 M1939.4,1711.6 L1979.1,1690.5 M1979.1,1690.5 L1979.1,1759.3 M1979.1,1759.3 L1939.4,1780.4 M1939.4,1780.4 L1939.4,1711.6 M1824.3,1665.3 L1842.9,1658.7 M1842.9,1658.7 L1842.9,1726.2 M1842.9,1726.2 L1824.3,1735.4 M1824.3,1735.4 L1824.3,1665.3 M1726.5,1632.3 L1745.0,1642.9 M1745.0,1642.9 L1745.0,1670.6 M1745.0,1670.6 L1726.5,1678.6 M1726.5,1678.6 L1726.5,1632.3 M1779.4,1662.7 L1797.9,1673.3 M1797.9,1673.3 L1797.9,1699.7 M1797.9,1699.7 L1779.4,1709.0 M1779.4,1709.0 L1779.4,1662.7 M1767.5,1784.4 L1824.3,1751.3 M1824.3,1751.3 L1824.3,1775.1 M1824.3,1775.1 L1784.7,1792.3 M1784.7,1792.3 L1767.5,1784.4 M2091.5,1882.3 L2200.5,1818.8 M2200.5,1818.8 L2200.5,1886.2 M2200.5,1886.2 L2173.5,1900.0 M2112.7,1900.0 L2091.5,1882.3 M2192.1,1900.0 L2270.1,1858.5 M2270.1,1858.5 L2270.1,1900.0 M2051.9,1900.0 L2088.9,1882.3 M2088.9,1882.3 L2088.9,1900.0 M773.0,1702.6 L782.2,1700.0 M866.9,1700.0 L866.9,1718.5 M866.9,1718.5 L833.8,1737.0 M833.8,1737.0 L773.0,1702.6 M861.6,1799.2 L993.9,1723.3 M993.9,1723.3 L993.9,1791.3 M993.9,1791.3 L921.1,1832.3 M921.1,1832.3 L861.6,1799.2 M1021.6,1846.8 L1115.6,1793.9 M1115.6,1793.9 L1115.6,1860.1 M1115.6,1860.1 L1082.5,1881.2 M1082.5,1881.2 L1021.6,1846.8 M1085.1,1882.5 L1177.7,1829.6 M1177.7,1829.6 L1177.7,1897.1 M1177.7,1897.1 L1143.3,1916.9 M1143.3,1916.9 L1085.1,1882.5 M1112.9,1943.4 L1199.9,1893.1 M1199.9,1960.6 L1171.1,1976.5 M1171.1,1976.5 L1112.9,1943.4 M1097.0,1700.0 L1097.0,1706.6 M1097.0,1706.6 L1086.5,1714.6 M1086.5,1714.6 L1054.7,1700.0 M1169.8,1764.8 L1199.9,1747.6 M1199.9,1780.7 L1169.8,1764.8 M1229.1,1730.4 L1299.2,1698.7 M1299.2,1698.7 L1299.2,1756.9 M1299.2,1756.9 L1271.4,1772.0 M1271.4,1772.0 L1229.1,1730.4 M1200.0,1746.3 L1219.8,1735.7 M1219.8,1735.7 L1219.8,1792.6 M1219.8,1792.6 L1200.0,1784.7 M1390.5,1700.0 L1390.5,1704.0 M1390.5,1704.0 L1366.7,1717.2 M1366.7,1717.2 L1333.6,1700.0 M1431.5,1752.9 L1489.7,1719.8 M1489.7,1719.8 L1489.7,1788.6 M1489.7,1788.6 L1431.5,1752.9 M1325.7,1792.6 L1406.3,1746.3 M1406.3,1746.3 L1406.3,1815.1 M1406.3,1815.1 L1368.0,1836.2 M1368.0,1836.2 L1327.0,1813.8 M1327.0,1813.8 L1325.7,1792.6 M1243.7,1807.1 L1272.8,1792.6 M1272.8,1792.6 L1272.8,1823.0 M1272.8,1823.0 L1263.5,1817.7 M1263.5,1817.7 L1243.7,1807.1 M1279.4,1827.0 L1325.7,1821.7 M1325.7,1821.7 L1325.7,1850.8 M1325.7,1850.8 L1279.4,1827.0 M1374.6,1883.9 L1508.2,1803.2 M1508.2,1803.2 L1620.6,1758.2 M1620.6,1758.2 L1620.6,1827.0 M1620.6,1827.0 L1608.7,1831.0 M1608.7,1831.0 L1584.9,1820.4 M1584.9,1820.4 L1525.4,1852.9 M1525.4,1852.9 L1524.1,1895.8 M1524.1,1895.8 L1495.0,1882.5 M1495.0,1882.5 L1483.1,1879.9 M1483.1,1879.9 L1374.6,1939.4 M1374.6,1939.4 L1374.6,1883.9 M1316.4,1977.8 L1483.1,1879.9 M1483.1,1879.9 L1483.1,1947.4 M1483.1,1947.4 L1375.9,2009.5 M1375.9,2009.5 L1316.4,1977.8 M1200.0,1901.1 L1243.7,1869.3 M1243.7,1869.3 L1243.7,1935.4 M1243.7,1935.4 L1200.0,1959.3 M1525.4,1852.9 L1584.9,1820.4 M1584.9,1820.4 L1584.9,1883.9 M1584.9,1883.9 L1525.4,1852.9 M1607.4,1895.8 L1663.0,1864.0 M1663.0,1864.0 L1663.0,1924.9 M1663.0,1924.9 L1607.4,1895.8 M1685.4,1935.4 L1737.0,1909.0 M1737.0,1909.0 L1737.0,1964.6 M1737.0,1964.6 L1685.4,1935.4 M1771.4,1980.4 L1820.4,1954.0 M1820.4,1954.0 L1820.4,2022.8 M1820.4,2022.8 L1795.2,2036.0 M1795.2,2036.0 L1771.4,2022.8 M1771.4,2022.8 L1771.4,1980.4 M1529.4,1877.2 L1550.5,1887.8 M1550.5,1887.8 L1550.5,1910.3 M1550.5,1910.3 L1529.4,1899.7 M1529.4,1899.7 L1529.4,1877.2 M1612.7,1920.9 L1633.9,1930.2 M1633.9,1930.2 L1633.9,1951.3 M1633.9,1951.3 L1612.7,1942.1 M1612.7,1942.1 L1612.7,1920.9 M1692.1,1960.6 L1711.9,1971.2 M1711.9,1971.2 L1711.9,1992.3 M1711.9,1992.3 L1692.1,1983.1 M1692.1,1983.1 L1692.1,1960.6 M1439.4,2049.2 L1581.0,1967.2 M1581.0,1967.2 L1581.0,2036.0 M1581.0,2036.0 L1500.3,2081.0 M1500.3,2081.0 L1439.4,2049.2 M1588.9,1963.2 L1614.0,1948.7 M1614.0,1948.7 L1614.0,1977.8 M1614.0,1977.8 L1588.9,1963.2 M1641.8,1991.0 L1670.9,1976.5 M1670.9,1976.5 L1670.9,2009.5 M1670.9,2009.5 L1641.8,1991.0 M1570.4,2100.0 L1734.4,2008.2 M1734.4,2008.2 L1734.4,2075.7 M1734.4,2075.7 L1689.4,2100.0 M1767.5,1784.7 L1824.3,1751.6 M1824.3,1751.6 L1824.3,1774.1 M1824.3,1774.1 L1786.0,1792.6 M1786.0,1792.6 L1767.5,1784.7 M1839.9,1729.1 L1824.3,1735.7 M1824.3,1735.7 L1824.3,1700.0 M2006.7,1926.5 L2059.6,1900.0 M2088.7,1900.0 L2088.7,1951.6 M2088.7,1951.6 L2006.7,1997.9 M2006.7,1997.9 L2006.7,1926.5 M2096.6,1906.6 L2116.5,1918.5 M2116.5,1918.5 L2116.5,1937.0 M2116.5,1937.0 L2096.6,1954.2 M2096.6,1954.2 L2096.6,1906.6 M2174.7,1900.0 L2154.8,1911.9 M2154.8,1911.9 L2127.0,1900.0 M2161.4,1919.8 L2195.8,1900.0 M2269.9,1900.0 L2269.9,1923.8 M2269.9,1923.8 L2222.3,1954.2 M2222.3,1954.2 L2161.4,1919.8 M2223.6,1955.6 L2316.2,1902.6 M2316.2,1902.6 L2332.1,1900.0 M2332.1,1900.0 L2332.1,1960.8 M2332.1,1960.8 L2284.4,1989.9 M2284.4,1989.9 L2223.6,1955.6 M2287.1,1991.3 L2395.6,1930.4 M2395.6,1930.4 L2395.6,1999.2 M2395.6,1999.2 L2347.9,2024.3 M2347.9,2024.3 L2287.1,1991.3 M2166.7,1947.6 L2186.6,1958.2 M2186.6,1958.2 L2186.6,1976.7 M2186.6,1976.7 L2166.7,1991.3 M2166.7,1991.3 L2166.7,1947.6 M2227.6,1983.3 L2247.4,1993.9 M2247.4,1993.9 L2247.4,2011.1 M2247.4,2011.1 L2227.6,2027.0 M2227.6,2027.0 L2227.6,1983.3 M2291.1,2019.0 L2310.9,2029.6 M2310.9,2029.6 L2310.9,2048.1 M2310.9,2048.1 L2291.1,2064.0 M2291.1,2064.0 L2291.1,2019.0 M1840.0,2069.3 L1867.8,2074.6 M1867.8,2074.6 L1867.8,2143.4 M1867.8,2143.4 L1840.0,2157.9 M2527.2,2132.5 L2631.7,2072.2 M2631.7,2072.2 L2631.7,2086.2 M2631.7,2086.2 L2597.3,2106.1 M2597.3,2106.1 L2623.8,2145.8 M2623.8,2145.8 L2594.7,2134.7 M2594.7,2134.7 L2564.2,2152.4 M2564.2,2152.4 L2527.2,2132.5 M2675.4,2217.2 L2729.6,2186.8 M2729.6,2186.8 L2729.6,2229.1 M2729.6,2229.1 L2713.7,2238.4 M2713.7,2238.4 L2675.4,2217.2 M2775.9,2278.0 L2843.3,2239.7 M2843.3,2239.7 L2843.3,2308.5 M2843.3,2308.5 L2836.7,2311.1 M2836.7,2311.1 L2775.9,2278.0 M2847.3,2238.4 L2887.0,2214.6 M2887.0,2214.6 L2887.0,2258.2 M2887.0,2258.2 L2847.3,2238.4 M2528.5,2156.3 L2555.0,2171.7 M2555.0,2171.7 L2555.0,2184.1 M2555.0,2184.1 L2531.2,2197.4 M2531.2,2197.4 L2528.5,2204.0 M2528.5,2204.0 L2528.5,2156.3 M2678.0,2242.3 L2704.5,2256.9 M2704.5,2256.9 L2704.5,2301.9 M2704.5,2301.9 L2678.0,2289.9 M2678.0,2289.9 L2678.0,2242.3 M2782.5,2303.2 L2815.6,2321.7 M2815.6,2321.7 L2783.8,2340.2 M2783.8,2340.2 L2782.5,2303.2 M2966.4,2307.1 L3008.7,2284.7 M3008.7,2284.7 L3008.7,2350.0 M2995.5,2350.0 L2995.5,2312.4 M2995.5,2312.4 L2976.9,2320.4 M2976.9,2320.4 L2976.9,2350.0 M2966.4,2350.0 L2966.4,2307.1 M1484.4,2050.0 L1484.4,2071.2 M1484.4,2071.2 L1443.4,2050.0 M1551.9,2050.0 L1501.6,2079.1 M1501.6,2079.1 L1501.6,2050.0 M1479.1,2155.8 L1655.0,2050.0 M1734.4,2050.0 L1734.4,2076.5 M1734.4,2076.5 L1538.6,2187.6 M1538.6,2187.6 L1479.1,2155.8 M1599.5,2227.2 L1686.8,2181.0 M1686.8,2181.0 L1686.8,2248.4 M1686.8,2248.4 L1599.5,2297.4 M1599.5,2297.4 L1599.5,2227.2 M1689.4,2179.6 L1840.2,2092.3 M1840.2,2161.1 L1750.3,2211.4 M1750.3,2211.4 L1689.4,2179.6 M2675.7,2216.9 L2730.6,2186.1 M2730.6,2186.1 L2730.6,2229.0 M2730.6,2229.0 L2713.2,2238.4 M2713.2,2238.4 L2675.7,2216.9 M2776.1,2278.5 L2844.4,2239.7 M2844.4,2239.7 L2844.4,2309.3 M2844.4,2309.3 L2836.3,2310.6 M2836.3,2310.6 L2776.1,2278.5 M2847.0,2237.0 L2887.2,2214.3 M2887.2,2214.3 L2887.2,2258.4 M2887.2,2258.4 L2847.0,2237.0 M2678.4,2242.4 L2703.8,2255.8 M2703.8,2255.8 L2703.8,2301.3 M2703.8,2301.3 L2678.4,2289.2 M2678.4,2289.2 L2678.4,2242.4 M2782.8,2303.9 L2816.3,2322.7 M2816.3,2322.7 L2784.1,2340.1 M2784.1,2340.1 L2782.8,2303.9 M2966.2,2308.0 L3009.0,2285.2 M3009.0,2285.2 L3009.0,2353.5 M3009.0,2353.5 L2994.3,2361.5 M2994.3,2361.5 L2994.3,2310.6 M2994.3,2310.6 L2976.9,2322.7 M2976.9,2322.7 L2976.9,2374.9 M2976.9,2374.9 L2966.2,2376.2 M2966.2,2376.2 L2966.2,2308.0 M2529.2,2156.7 L2555.2,2172.8 M2555.2,2172.8 L2555.2,2183.5 M2555.2,2183.5 L2532.4,2195.5 M2532.4,2195.5 L2529.2,2203.5 M2529.2,2203.5 L2529.2,2156.7 M2591.4,2400.1 L2608.8,2389.6 M2608.8,2389.6 L2608.8,2400.1 M2608.8,2400.1 L2591.4,2400.1 M2626.2,2400.1 L2636.9,2393.6 M2636.9,2393.6 L2636.9,2400.1 M2636.9,2400.1 L2626.2,2400.1 M1676.4,1603.5 L1695.0,1612.0 M1695.0,1612.0 L1695.0,1657.0 M1695.0,1657.0 L1676.4,1649.0 M1676.4,1649.0 L1676.4,1603.5 M1018.9,1672.0 L1096.6,1640.6 M1096.6,1640.6 L1096.6,1710.0 M1096.6,1710.0 L1075.0,1717.3 M1075.0,1717.3 L1018.9,1672.0" fill="none" stroke="#8e8e8e" stroke-width="1.2"/>
<path d="M674.3,1467.9 L737.8,1435.6 M538.0,1585.1 L622.7,1634.0 L785.4,1540.1 M798.6,1468.7 L915.0,1534.8 M945.4,1385.4 L999.7,1415.8 M913.7,1538.8 L985.1,1577.2 M997.0,1491.2 L1059.2,1528.2 M1005.0,1676.4 L1046.0,1655.2 M1005.0,1676.4 L1005.0,1706.0 M692.8,1529.5 L737.8,1552.0 L737.8,1525.6 M1199.2,1307.3 L1252.1,1337.7 M1301.1,1383.5 L1385.7,1415.8 M1201.9,1462.1 L1311.6,1395.9 M1319.6,1528.2 L1536.5,1653.9 L1605.3,1618.2 L1739.9,1694.9 M1100.0,1464.7 L1204.5,1522.9 M1100.0,1642.0 L1160.8,1675.0 M1451.9,1454.1 L1668.8,1578.5 M1147.6,1417.1 L1182.0,1437.0 L1182.0,1459.4 M1164.8,1406.5 L1200.5,1427.7 L1200.5,1459.4 M1183.3,1395.9 L1219.0,1417.1 L1219.0,1450.2 M1201.9,1385.4 L1237.6,1406.5 L1237.6,1439.6 M1219.0,1376.1 L1254.8,1395.9 L1254.8,1429.0 M1700.0,1821.4 L1837.6,1900.0 M1730.4,1791.0 L1748.9,1800.3 L1748.9,1846.6 M1836.2,1851.9 L1858.7,1863.8 L1858.7,1900.0 M1700.0,1527.8 L1735.7,1548.9 M1883.9,1636.2 L1975.1,1687.8 M1846.8,1657.4 L1936.8,1709.0 M769.0,1700.0 L896.0,1774.1 L930.4,1754.2 M861.6,1799.2 L1112.9,1943.4 M921.1,1832.3 L980.6,1866.7 L1052.1,1823.0 M1082.5,1881.2 L1143.3,1916.9 L1177.7,1897.1 M1239.7,2016.1 L1311.1,1975.1 M1375.9,2009.5 L1439.4,2046.6 M1272.8,1755.6 L1272.8,1786.0 L1316.4,1787.3 L1334.9,1776.7 M1274.1,1792.6 L1316.4,1792.6 L1325.7,1821.7 L1279.4,1827.0 L1274.1,1823.0 M2451.1,2085.2 L2479.9,2069.3 M1981.5,2118.3 L1981.5,2082.5 L2021.2,2082.5 L1993.4,2103.7 M1840.0,2206.9 L1863.8,2189.7 L1891.6,2283.6 L1840.0,2255.8 M1840.0,2241.3 L1857.2,2196.3 L1874.4,2263.8 L1840.0,2246.6 M1980.2,2300.0 L1980.2,2282.3 L2017.2,2300.0 M2428.0,2016.1 L2498.1,2057.1 L2557.6,2024.1 M2428.0,1950.0 L2557.6,2024.1 M2450.5,2086.2 L2498.1,2057.1 M2474.3,2172.2 L2474.3,2124.6 L2494.1,2135.2 L2494.1,2182.8 M2721.7,2315.1 L2721.7,2267.5 L2740.2,2278.0 L2740.2,2325.7 M2428.0,2316.4 L2470.3,2283.3 L2576.1,2331.0 L2576.1,2340.2 L2428.0,2328.3 M2443.9,2315.1 L2443.9,2304.5 L2533.8,2309.8 L2533.8,2320.4 L2443.9,2315.1 M2836.7,2311.1 L2966.4,2385.2 M1477.8,2155.8 L1541.3,2189.7 L1599.5,2224.6 M2420.0,2150.0 L2875.2,2400.1 M2422.7,2321.4 L2469.5,2283.9 L2575.3,2329.4 L2575.3,2340.1 L2422.7,2332.1 L2422.7,2321.4 M2444.1,2303.9 L2532.4,2309.3 L2532.4,2320.0 L2444.1,2314.7 L2444.1,2303.9 M2474.9,2150.0 L2474.9,2172.8 M2493.6,2150.0 L2493.6,2182.1 M2721.2,2314.7 L2721.2,2267.8 L2739.9,2278.5 L2739.9,2325.4 M2420.0,2389.6 L2608.8,2389.6 M2017.0,1868.5 L2041.0,1882.0 L2041.0,1893.0 M1775.0,1817.0 L1796.7,1826.8 L1796.7,1870.5 M1836.4,1898.3 L1836.4,1851.6 L1859.2,1863.5 L1859.2,1912.0" fill="none" stroke="#9e9e9e" stroke-width="1.3" stroke-linejoin="round"/>
<polygon points="1993.4,2103.7 2142.9,2019.0 2203.7,2098.4 2058.3,2184.4" fill="#b0b0b0"/>
<line x1="1993.4" y1="2103.7" x2="2142.9" y2="2019.0" stroke="#979797" stroke-width="2.2"/>
<line x1="1997.2" y1="2108.4" x2="2146.5" y2="2023.7" stroke="#979797" stroke-width="2.2"/>
<line x1="2001.0" y1="2113.2" x2="2150.1" y2="2028.3" stroke="#979797" stroke-width="2.2"/>
<line x1="2004.9" y1="2117.9" x2="2153.6" y2="2033.0" stroke="#979797" stroke-width="2.2"/>
<line x1="2008.7" y1="2122.7" x2="2157.2" y2="2037.7" stroke="#979797" stroke-width="2.2"/>
<line x1="2012.5" y1="2127.4" x2="2160.8" y2="2042.4" stroke="#979797" stroke-width="2.2"/>
<line x1="2016.3" y1="2132.2" x2="2164.4" y2="2047.0" stroke="#979797" stroke-width="2.2"/>
<line x1="2020.1" y1="2136.9" x2="2167.9" y2="2051.7" stroke="#979797" stroke-width="2.2"/>
<line x1="2023.9" y1="2141.7" x2="2171.5" y2="2056.4" stroke="#979797" stroke-width="2.2"/>
<line x1="2027.8" y1="2146.4" x2="2175.1" y2="2061.0" stroke="#979797" stroke-width="2.2"/>
<line x1="2031.6" y1="2151.2" x2="2178.7" y2="2065.7" stroke="#979797" stroke-width="2.2"/>
<line x1="2035.4" y1="2155.9" x2="2182.2" y2="2070.4" stroke="#979797" stroke-width="2.2"/>
<line x1="2039.2" y1="2160.7" x2="2185.8" y2="2075.0" stroke="#979797" stroke-width="2.2"/>
<line x1="2043.0" y1="2165.4" x2="2189.4" y2="2079.7" stroke="#979797" stroke-width="2.2"/>
<line x1="2046.8" y1="2170.2" x2="2193.0" y2="2084.4" stroke="#979797" stroke-width="2.2"/>
<line x1="2050.7" y1="2174.9" x2="2196.5" y2="2089.1" stroke="#979797" stroke-width="2.2"/>
<line x1="2054.5" y1="2179.7" x2="2200.1" y2="2093.7" stroke="#979797" stroke-width="2.2"/>
<line x1="2058.3" y1="2184.4" x2="2203.7" y2="2098.4" stroke="#979797" stroke-width="2.2"/>
<polygon points="2096.6,2209.5 2240.8,2124.9 2308.3,2210.8 2161.4,2295.5" fill="#b0b0b0"/>
<line x1="2096.6" y1="2209.5" x2="2240.8" y2="2124.9" stroke="#979797" stroke-width="2.2"/>
<line x1="2100.4" y1="2214.6" x2="2244.8" y2="2130.0" stroke="#979797" stroke-width="2.2"/>
<line x1="2104.2" y1="2219.6" x2="2248.7" y2="2135.0" stroke="#979797" stroke-width="2.2"/>
<line x1="2108.0" y1="2224.7" x2="2252.7" y2="2140.1" stroke="#979797" stroke-width="2.2"/>
<line x1="2111.8" y1="2229.7" x2="2256.7" y2="2145.1" stroke="#979797" stroke-width="2.2"/>
<line x1="2115.7" y1="2234.8" x2="2260.7" y2="2150.2" stroke="#979797" stroke-width="2.2"/>
<line x1="2119.5" y1="2239.9" x2="2264.6" y2="2155.2" stroke="#979797" stroke-width="2.2"/>
<line x1="2123.3" y1="2244.9" x2="2268.6" y2="2160.3" stroke="#979797" stroke-width="2.2"/>
<line x1="2127.1" y1="2250.0" x2="2272.6" y2="2165.3" stroke="#979797" stroke-width="2.2"/>
<line x1="2130.9" y1="2255.0" x2="2276.5" y2="2170.4" stroke="#979797" stroke-width="2.2"/>
<line x1="2134.7" y1="2260.1" x2="2280.5" y2="2175.4" stroke="#979797" stroke-width="2.2"/>
<line x1="2138.5" y1="2265.1" x2="2284.5" y2="2180.5" stroke="#979797" stroke-width="2.2"/>
<line x1="2142.3" y1="2270.2" x2="2288.4" y2="2185.5" stroke="#979797" stroke-width="2.2"/>
<line x1="2146.2" y1="2275.3" x2="2292.4" y2="2190.6" stroke="#979797" stroke-width="2.2"/>
<line x1="2150.0" y1="2280.3" x2="2296.4" y2="2195.6" stroke="#979797" stroke-width="2.2"/>
<line x1="2153.8" y1="2285.4" x2="2300.4" y2="2200.7" stroke="#979797" stroke-width="2.2"/>
<line x1="2157.6" y1="2290.4" x2="2304.3" y2="2205.7" stroke="#979797" stroke-width="2.2"/>
<line x1="2161.4" y1="2295.5" x2="2308.3" y2="2210.8" stroke="#979797" stroke-width="2.2"/>
<polygon points="633.3,1482.0 684.9,1509.7 621.4,1591.7 571.1,1563.9" fill="#b0b0b0"/>
<line x1="633.3" y1="1482.0" x2="684.9" y2="1509.7" stroke="#979797" stroke-width="2.2"/>
<line x1="629.8" y1="1486.5" x2="681.4" y2="1514.3" stroke="#979797" stroke-width="2.2"/>
<line x1="626.4" y1="1491.1" x2="677.8" y2="1518.8" stroke="#979797" stroke-width="2.2"/>
<line x1="622.9" y1="1495.7" x2="674.3" y2="1523.4" stroke="#979797" stroke-width="2.2"/>
<line x1="619.5" y1="1500.2" x2="670.8" y2="1527.9" stroke="#979797" stroke-width="2.2"/>
<line x1="616.0" y1="1504.8" x2="667.3" y2="1532.5" stroke="#979797" stroke-width="2.2"/>
<line x1="612.6" y1="1509.3" x2="663.7" y2="1537.0" stroke="#979797" stroke-width="2.2"/>
<line x1="609.1" y1="1513.9" x2="660.2" y2="1541.6" stroke="#979797" stroke-width="2.2"/>
<line x1="605.7" y1="1518.4" x2="656.7" y2="1546.1" stroke="#979797" stroke-width="2.2"/>
<line x1="602.2" y1="1523.0" x2="653.1" y2="1550.7" stroke="#979797" stroke-width="2.2"/>
<line x1="598.7" y1="1527.5" x2="649.6" y2="1555.3" stroke="#979797" stroke-width="2.2"/>
<line x1="595.3" y1="1532.0" x2="646.1" y2="1559.8" stroke="#979797" stroke-width="2.2"/>
<line x1="591.8" y1="1536.6" x2="642.6" y2="1564.4" stroke="#979797" stroke-width="2.2"/>
<line x1="588.4" y1="1541.2" x2="639.0" y2="1568.9" stroke="#979797" stroke-width="2.2"/>
<line x1="584.9" y1="1545.7" x2="635.5" y2="1573.5" stroke="#979797" stroke-width="2.2"/>
<line x1="581.5" y1="1550.2" x2="632.0" y2="1578.0" stroke="#979797" stroke-width="2.2"/>
<line x1="578.0" y1="1554.8" x2="628.5" y2="1582.6" stroke="#979797" stroke-width="2.2"/>
<line x1="574.6" y1="1559.4" x2="624.9" y2="1587.1" stroke="#979797" stroke-width="2.2"/>
<line x1="571.1" y1="1563.9" x2="621.4" y2="1591.7" stroke="#979797" stroke-width="2.2"/>
<polygon points="2597.3,2106.1 2634.3,2086.2 2693.9,2166.9 2675.4,2178.8" fill="#b0b0b0"/>
<line x1="2597.3" y1="2106.1" x2="2634.3" y2="2086.2" stroke="#979797" stroke-width="2.2"/>
<line x1="2603.3" y1="2111.7" x2="2638.9" y2="2092.4" stroke="#979797" stroke-width="2.2"/>
<line x1="2609.3" y1="2117.3" x2="2643.5" y2="2098.6" stroke="#979797" stroke-width="2.2"/>
<line x1="2615.3" y1="2122.9" x2="2648.1" y2="2104.8" stroke="#979797" stroke-width="2.2"/>
<line x1="2621.3" y1="2128.5" x2="2652.6" y2="2111.0" stroke="#979797" stroke-width="2.2"/>
<line x1="2627.3" y1="2134.1" x2="2657.2" y2="2117.2" stroke="#979797" stroke-width="2.2"/>
<line x1="2633.3" y1="2139.7" x2="2661.8" y2="2123.4" stroke="#979797" stroke-width="2.2"/>
<line x1="2639.4" y1="2145.2" x2="2666.4" y2="2129.7" stroke="#979797" stroke-width="2.2"/>
<line x1="2645.4" y1="2150.8" x2="2671.0" y2="2135.9" stroke="#979797" stroke-width="2.2"/>
<line x1="2651.4" y1="2156.4" x2="2675.6" y2="2142.1" stroke="#979797" stroke-width="2.2"/>
<line x1="2657.4" y1="2162.0" x2="2680.1" y2="2148.3" stroke="#979797" stroke-width="2.2"/>
<line x1="2663.4" y1="2167.6" x2="2684.7" y2="2154.5" stroke="#979797" stroke-width="2.2"/>
<line x1="2669.4" y1="2173.2" x2="2689.3" y2="2160.7" stroke="#979797" stroke-width="2.2"/>
<line x1="2675.4" y1="2178.8" x2="2693.9" y2="2166.9" stroke="#979797" stroke-width="2.2"/>
<polygon points="1046,1617 1210,1521 1210,1566 1177.5,1582.5 1160,1593.6 1098,1634 1046,1658" fill="#a96fd1" stroke="#d9a9f7" stroke-width="2.2" stroke-linejoin="round"/>
<polygon points="1080,1609 1097,1599 1097,1629 1080,1640" fill="#b98ade"/>
<polygon points="1160,1563 1177,1553 1177,1583 1160,1593" fill="#b98ade"/>
<polygon points="1186,1559 1207,1548 1207,1560 1186,1571" fill="#f5b82e"/>
<g font-family="Liberation Sans" font-weight="bold" font-size="31" fill="#f5f5f5" text-anchor="middle">
<g><circle cx="1084" cy="1462" r="21" fill="#000" opacity="0.18" filter="url(#fpblur)"/><circle cx="1084" cy="1459.8" r="21" fill="#8a8a8a"/><circle cx="1084" cy="1459.8" r="19" fill="#3d3d3d"/><text x="1084" y="1471">4</text></g>
<g><circle cx="1942.75" cy="1955.5" r="21" fill="#000" opacity="0.18" filter="url(#fpblur)"/><circle cx="1942.75" cy="1953.1" r="21" fill="#8a8a8a"/><circle cx="1942.75" cy="1953.1" r="19" fill="#3d3d3d"/><text x="1943" y="1965">2</text></g>
<g><circle cx="2252.3" cy="2334" r="21" fill="#000" opacity="0.18" filter="url(#fpblur)"/><circle cx="2252.3" cy="2331.7" r="21" fill="#8a8a8a"/><circle cx="2252.3" cy="2331.7" r="19" fill="#3d3d3d"/><text x="2252.5" y="2343">1</text></g>
<rect x="1222.5" y="1510" width="43" height="33" fill="#146427" stroke="#36b35a" stroke-width="2.5"/>
<text x="1244" y="1538" font-size="30">3</text>
</g>

</g></svg>

<div id="tools" class="abs"></div>
<div id="layers" class="abs"></div>
<div class="t" style="left:73px;top:2319px;font-size:31px;font-weight:bold;color:#e2e2e2;text-shadow:0 2px 3px rgba(0,0,0,.4)">EG</div>
<div id="ctrl" class="abs"></div>
<div class="abs" style="left:2709px;top:1357px;width:168px;height:17px;background:#666"></div>
<div class="abs" style="left:2709px;top:1357px;width:57px;height:17px;background:#cccccc"></div>
<div class="t" style="left:2899px;top:1353px;font-size:29px;color:#4db3ee">45°</div>
<div class="t" style="left:2963px;top:1353px;font-size:29px;color:#d6d6d6">Frei</div>


<!-- right panel -->
<div id="panel"></div>
<div id="panelhead"></div>
<div class="t" style="left:3179px;top:138px;font-size:32px;font-weight:bold;color:#d4d4d4;letter-spacing:-0.3px">Zurück</div>
<div class="abs" style="left:3088px;top:235px;width:731px;height:96px;background:#71448d;border:3px solid #8a55b0"></div>
<div class="t" style="left:3120px;top:269px;font-size:32px;font-weight:bold;color:#f2f2f2;letter-spacing:-0.45px">Eingang_zu_Seminarraum</div>
<div class="conn" style="top:331px;height:22px"></div>
<div class="item" style="top:352px;height:85px"></div>
<div class="num" style="top:373px">1</div>
<div class="itxt" style="top:381px;left:3202px">Allgemeines_Empfangsschild_EG</div>
<div class="gdot" style="top:384px"></div>
<div class="conn" style="top:437px;height:22px"></div>
<div class="item" style="top:459px;height:85px"></div>
<div class="num" style="top:480px">2</div>
<div class="itxt" style="top:488px;left:3195px;letter-spacing:-0.25px">Richtungsweiser_Links_Vorne_EG</div>
<div class="gdot" style="top:491px"></div>
<div class="conn" style="top:544px;height:22px"></div>
<div class="item" style="top:566px;height:526px"></div>
<div class="conn" style="top:1092px;height:23px"></div>
<div class="item" style="top:1115px;height:75px"></div>
<div class="num" style="top:1136px">4</div>
<div class="itxt" style="top:1144px;left:3195px;letter-spacing:-0.1px">Türschild_Seminar_01_EG</div>
<div class="gdot" style="top:1147px"></div>
<div class="abs" style="left:3117px;top:592px;width:46px;height:35px;background:#166528;border:2px solid #2a9a3e;color:#f2f2f2;font-size:30px;font-weight:bold;text-align:center;line-height:31px">3</div>
<div class="itxt" style="top:595px;left:3195px;letter-spacing:-0.25px">Richtungsweiser_Links_Vorne_EG</div>
<div class="sign" id="bigsign" style="left:3120px;top:675px">
  <div class="circ"></div><div class="pill"></div><svg style="position:absolute;left:0;top:0" width="667" height="327"><polygon points="33.7,79.3 63.7,50.5 76.7,50.5 53.2,74 95.7,74 95.7,84.6 53.2,84.6 76.7,108.1 63.7,108.1" fill="#000"/><polygon points="67,138.3 95.7,167.6 95.7,181 72.6,157.5 72.6,200 61.5,200 61.5,157.5 38,181 38,167.6" fill="#000"/></svg>
  <div class="st" style="left:163px;top:55px">Makerspace 1</div>
  <div class="st" style="left:163px;top:146px">Seminarraum 1</div>
  <div class="st" style="left:163px;top:237px">Toiletten</div>
  <div class="st" style="left:519px;top:55px;font-weight:normal;font-size:44px">0.36</div>
  <div class="st" style="left:519px;top:146px;font-weight:normal;font-size:44px">0.30</div>
</div>
<div class="itxt" style="top:1027px;left:3121px;letter-spacing:-1.05px">WANDSCHILD_WEGWEISER_01</div>

<svg class="abs" style="left:0;top:0;overflow:visible" width="3840" height="2400" viewBox="0 0 3840 2400">
<defs>
<filter id="sh" x="-30%" y="-30%" width="160%" height="160%"><feDropShadow dx="0" dy="2" stdDeviation="2" flood-color="#000" flood-opacity="0.35"/></filter>
<filter id="sh2" x="-30%" y="-30%" width="160%" height="160%"><feDropShadow dx="0" dy="3" stdDeviation="3" flood-color="#000" flood-opacity="0.45"/></filter>
</defs>
<!-- play -->
<path d="M2961,167 Q2961,163 2965,165 L3000,184 Q3003,186.6 3000,189 L2965,208 Q2961,210 2961,206 Z" fill="#cdcdcd" filter="url(#sh)"/>
<!-- cursor -->
<polygon points="71.9,1031.9 111.6,1046.6 102.3,1052.7 114.3,1066.8 106.8,1074.7 92.7,1061.7 86.2,1071.6" fill="#d0d0d0" filter="url(#sh)"/>
<!-- hand -->
<g fill="#d0d0d0" filter="url(#sh)">
<rect x="82.6" y="1114.6" width="7.7" height="36" rx="3.85"/>
<rect x="91.8" y="1109.3" width="8.2" height="40" rx="4.1"/>
<rect x="100.8" y="1111.8" width="8.5" height="38" rx="4.2"/>
<rect x="110.7" y="1118.6" width="7.7" height="30" rx="3.85"/>
<path d="M82.6,1140 L118.4,1140 L118.4,1150 Q118.4,1167 100,1167 Q88,1167 80,1157 L70.5,1145 Q68,1140 72,1138 Q75,1136.5 78,1139 L82.6,1143 Z"/>
</g>
<!-- magnifier -->
<g fill="#d0d0d0" filter="url(#sh)">
<circle cx="86.4" cy="1217.5" r="19.5"/>
<line x1="101" y1="1232" x2="113.5" y2="1244.5" stroke="#d0d0d0" stroke-width="7" stroke-linecap="round"/>
</g>
<!-- plus -->
<circle cx="93.4" cy="1354.8" r="24" fill="#d0d0d0" filter="url(#sh)"/>
<rect x="80" y="1352.7" width="26.7" height="3.6" fill="#464646"/>
<rect x="91.6" y="1341" width="3.6" height="26.7" fill="#464646"/>
<!-- layers -->
<polygon points="93.5,2221 135,2245 93.5,2269 52,2245" fill="#2eaef2" stroke="#2eaef2" stroke-width="2" stroke-linejoin="round" filter="url(#sh2)"/>
<polygon points="93.5,2189 135,2213 93.5,2237 52,2213" fill="#d3d3d3" stroke="#d3d3d3" stroke-width="2" stroke-linejoin="round" filter="url(#sh2)"/>
<polygon points="93.5,2158 135,2181.5 93.5,2205 52,2181.5" fill="#d3d3d3" stroke="#d3d3d3" stroke-width="2" stroke-linejoin="round" filter="url(#sh2)"/>
<!-- rotate icon -->
<g fill="none" stroke="#d2d2d2" stroke-width="3.6" stroke-linecap="round">
<path d="M2668,1376.5 A10,11 0 0 1 2664,1357.5"/>
<path d="M2676.5,1353.5 A10,11 0 0 1 2680.5,1372"/>
</g>
<polygon points="2659.5,1351.5 2668.6,1351.5 2668.6,1360.5" fill="#d2d2d2"/>
<polygon points="2675.4,1370 2675.4,1379 2684.5,1379" fill="#d2d2d2"/>
<!-- zurueck arrow -->
<g fill="none" stroke="#d0d0d0" stroke-width="4.5" stroke-linecap="round" stroke-linejoin="round">
<polyline points="3136,136 3119.5,152 3136,168"/>
<line x1="3120" y1="152" x2="3154" y2="152"/>
</g>
<!-- chevrons -->
<g fill="none" stroke="#f2f2f2" stroke-width="3.5" stroke-linecap="square">
<polyline points="3765.5,389 3776,399.5 3786.5,389"/>
<polyline points="3765.5,496 3776,506.5 3786.5,496"/>
<polyline points="3765.5,613 3776,602.5 3786.5,613"/>
<polyline points="3765.5,1151.5 3776,1162 3786.5,1151.5"/>
</g>
</svg>

</body></html>
